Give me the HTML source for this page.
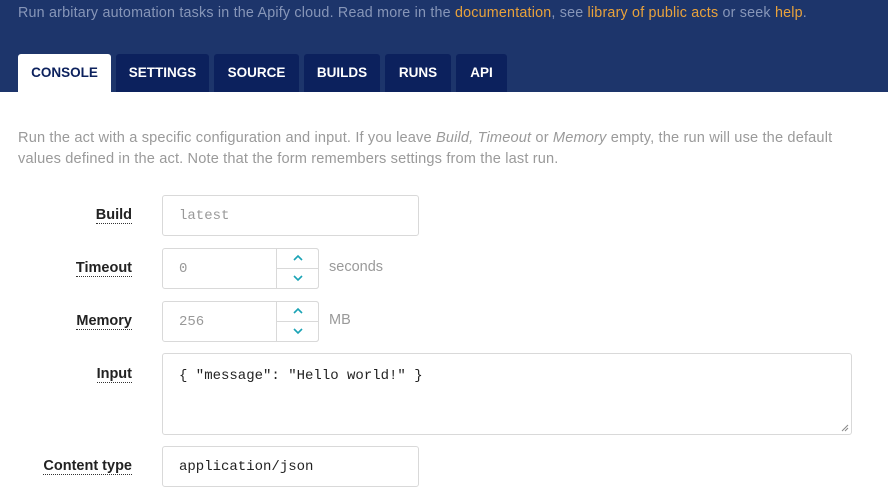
<!DOCTYPE html>
<html><head><meta charset="utf-8"><style>
*{box-sizing:border-box;margin:0;padding:0}
body{width:888px;height:500px;overflow:hidden;background:#fff;font-family:"Liberation Sans",sans-serif;position:relative}
.hdr{position:absolute;left:0;top:0;width:888px;height:92px;background:#1d356b}
.hdr p{position:absolute;left:18px;top:5px;font-size:14.3px;color:#8796b8;white-space:nowrap;letter-spacing:0.2px}
.hdr a{color:#e8a23c;text-decoration:none}
.tab{position:absolute;top:54px;height:38px;background:#0c215d;color:#fff;font-weight:bold;font-size:13.5px;text-align:center;line-height:38px;border-radius:3px 3px 0 0}
.tab.on{background:#fff;color:#0c215d}
.intro{position:absolute;left:18px;top:128px;font-size:14.6px;line-height:21px;color:#9a9a9a;width:840px;letter-spacing:0.15px}
.lbl{position:absolute;right:756px;font-size:14.5px;font-weight:bold;color:#222;border-bottom:1px dotted #333;line-height:15px;white-space:nowrap}
.box{position:absolute;border:1px solid #d9d9d9;border-radius:3px;font-family:"Liberation Mono",monospace;font-size:14px;padding-left:16px}
.spin{position:absolute;top:-1px;right:-1px;width:43px;bottom:-1px;border:1px solid #d9d9d9;border-radius:0 3px 3px 0}
.spin div{height:50%;display:flex;align-items:center;justify-content:center}
.spin div:first-child{border-bottom:1px solid #d9d9d9}
.unit{position:absolute;left:329px;font-size:14.5px;color:#9a9a9a}
</style></head><body>
<div class="hdr"><p>Run arbitary automation tasks in the Apify cloud. Read more in the <a>documentation</a>, see <a>library of public acts</a> or seek <a>help</a>.</p>
<div class="tab on" style="left:18px;width:93px">CONSOLE</div>
<div class="tab" style="left:116px;width:93px">SETTINGS</div>
<div class="tab" style="left:214px;width:85px">SOURCE</div>
<div class="tab" style="left:304px;width:76px">BUILDS</div>
<div class="tab" style="left:385px;width:66px">RUNS</div>
<div class="tab" style="left:456px;width:51px">API</div>
</div>
<div class="intro">Run the act with a specific configuration and input. If you leave <i>Build, Timeout</i> or <i>Memory</i> empty, the run will use the default<br>values defined in the act. Note that the form remembers settings from the last run.</div>

<div class="lbl" style="top:208px">Build</div>
<div class="box" style="left:162px;top:195px;width:257px;height:41px;line-height:41px;color:#999">latest</div>

<div class="lbl" style="top:261px">Timeout</div>
<div class="box" style="left:162px;top:248px;width:157px;height:41px;line-height:41px;color:#999">0
<div class="spin"><div><svg width="12" height="8"><path d="M2 6 L6 2 L10 6" fill="none" stroke="#1aa3b5" stroke-width="1.6"/></svg></div><div><svg width="12" height="8"><path d="M2 2 L6 6 L10 2" fill="none" stroke="#1aa3b5" stroke-width="1.6"/></svg></div></div></div>
<div class="unit" style="top:259px">seconds</div>

<div class="lbl" style="top:314px">Memory</div>
<div class="box" style="left:162px;top:301px;width:157px;height:41px;line-height:41px;color:#999">256
<div class="spin"><div><svg width="12" height="8"><path d="M2 6 L6 2 L10 6" fill="none" stroke="#1aa3b5" stroke-width="1.6"/></svg></div><div><svg width="12" height="8"><path d="M2 2 L6 6 L10 2" fill="none" stroke="#1aa3b5" stroke-width="1.6"/></svg></div></div></div>
<div class="unit" style="top:312px">MB</div>

<div class="lbl" style="top:367px">Input</div>
<div class="box" style="left:162px;top:353px;width:690px;height:82px;padding-top:14px;color:#222">{ "message": "Hello world!" }
<svg style="position:absolute;right:2px;bottom:2px" width="8" height="8"><path d="M1 7 L7 1 M4 7 L7 4" stroke="#888" stroke-width="1"/></svg></div>

<div class="lbl" style="top:459px">Content type</div>
<div class="box" style="left:162px;top:446px;width:257px;height:41px;line-height:41px;color:#222">application/json</div>
</body></html>
